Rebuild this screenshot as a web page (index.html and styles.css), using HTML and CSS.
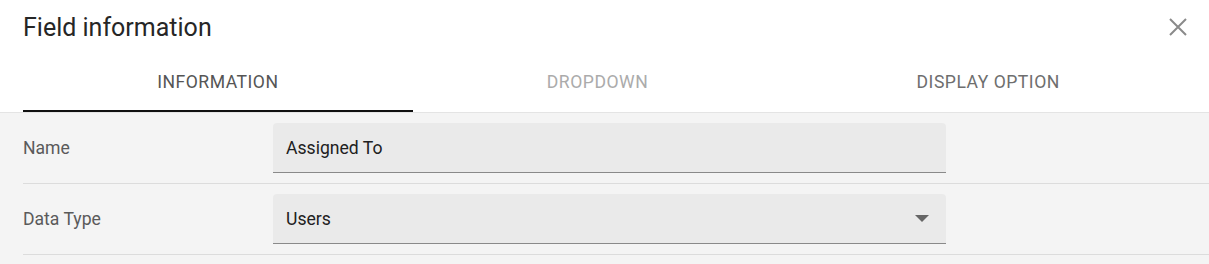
FILE: index.html
```html
<!DOCTYPE html>
<html lang="en">
<head>
    <meta charset="UTF-8">
    <meta name="viewport" content="width=device-width, initial-scale=1.0">
    <title>Field information</title>
    <link rel="stylesheet" href="styles.css">
</head>
<body>

    <div class="dialog-header">
        <div class="title-row">
            <h1>Field information</h1>
            <button class="close-btn" aria-label="Close">
                <svg width="18" height="18" viewBox="0 0 18 18">
                    <path d="M1 1 L17 17 M17 1 L1 17" stroke="currentColor" stroke-width="2" fill="none"/>
                </svg>
            </button>
        </div>
        <div class="tabs">
            <div class="tab active">Information</div>
            <div class="tab disabled">Dropdown</div>
            <div class="tab">Display option</div>
        </div>
    </div>

    <div class="dialog-body">
        <div class="field-row">
            <label for="nombre">Name</label>
            <div class="input-box">
                <input type="text" id="nombre" value="Assigned To">
            </div>
        </div>
        <div class="field-row">
            <label>Data Type</label>
            <div class="input-box select-box">
                <span>Users</span>
                <span class="arrow"></span>
            </div>
        </div>
    </div>

</body>
</html>
```

FILE: styles.css
```css
body {
    font-family: Roboto, "Liberation Sans", sans-serif;
    margin: 0;
    background-color: #f4f4f4;
}
.dialog-header {
    background-color: white;
    padding: 0 22px 0 23px;
    border-bottom: 1px solid #e4e4e4;
}
.title-row {
    display: flex;
    justify-content: space-between;
    align-items: center;
    height: 57px;
}
h1 {
    margin: -2px 0 0 0;
    font-size: 25px;
    font-weight: 400;
    color: #262626;
    line-height: 30px;
}
.close-btn {
    background: none;
    border: none;
    padding: 0;
    color: #8a8a8a;
    cursor: pointer;
    display: flex;
    margin-top: -4px;
}
.tabs {
    display: flex;
    margin-right: -7px;
}
.tab {
    flex: 1 1 auto;
    text-align: center;
    text-transform: uppercase;
    font-size: 17.6px;
    font-weight: 400;
    letter-spacing: 0.5px;
    color: #555;
    height: 53px;
    line-height: 51px;
    border-bottom: 2px solid transparent;
}
.tab.active {
    border-bottom-color: #111;
}
.tab.disabled {
    color: #ababab;
}
.tab.disabled + .tab {
    color: #6e6e6e;
}
.dialog-body {
    padding-left: 23px;
}
.field-row {
    display: flex;
    align-items: center;
    padding: 10px 0;
    border-bottom: 1px solid #dcdcdc;
}
.field-row label {
    width: 250px;
    font-size: 17.6px;
    color: #5a5a5a;
}
.input-box {
    width: 673px;
    height: 49px;
    box-sizing: content-box;
    background-color: #eaeaea;
    border-bottom: 1px solid #8a8a8a;
    border-radius: 4px 4px 0 0;
    display: flex;
    align-items: center;
}
.input-box input {
    border: none;
    background: transparent;
    font-family: inherit;
    font-size: 17.6px;
    color: #212121;
    padding: 0 13px;
    width: 100%;
    outline: none;
}
.select-box {
    justify-content: space-between;
    font-size: 17.6px;
    color: #212121;
    padding-left: 13px;
    width: 660px;
}
.arrow {
    width: 0;
    height: 0;
    border-left: 7px solid transparent;
    border-right: 7px solid transparent;
    border-top: 7px solid #666;
    margin-right: 17px;
}
```
